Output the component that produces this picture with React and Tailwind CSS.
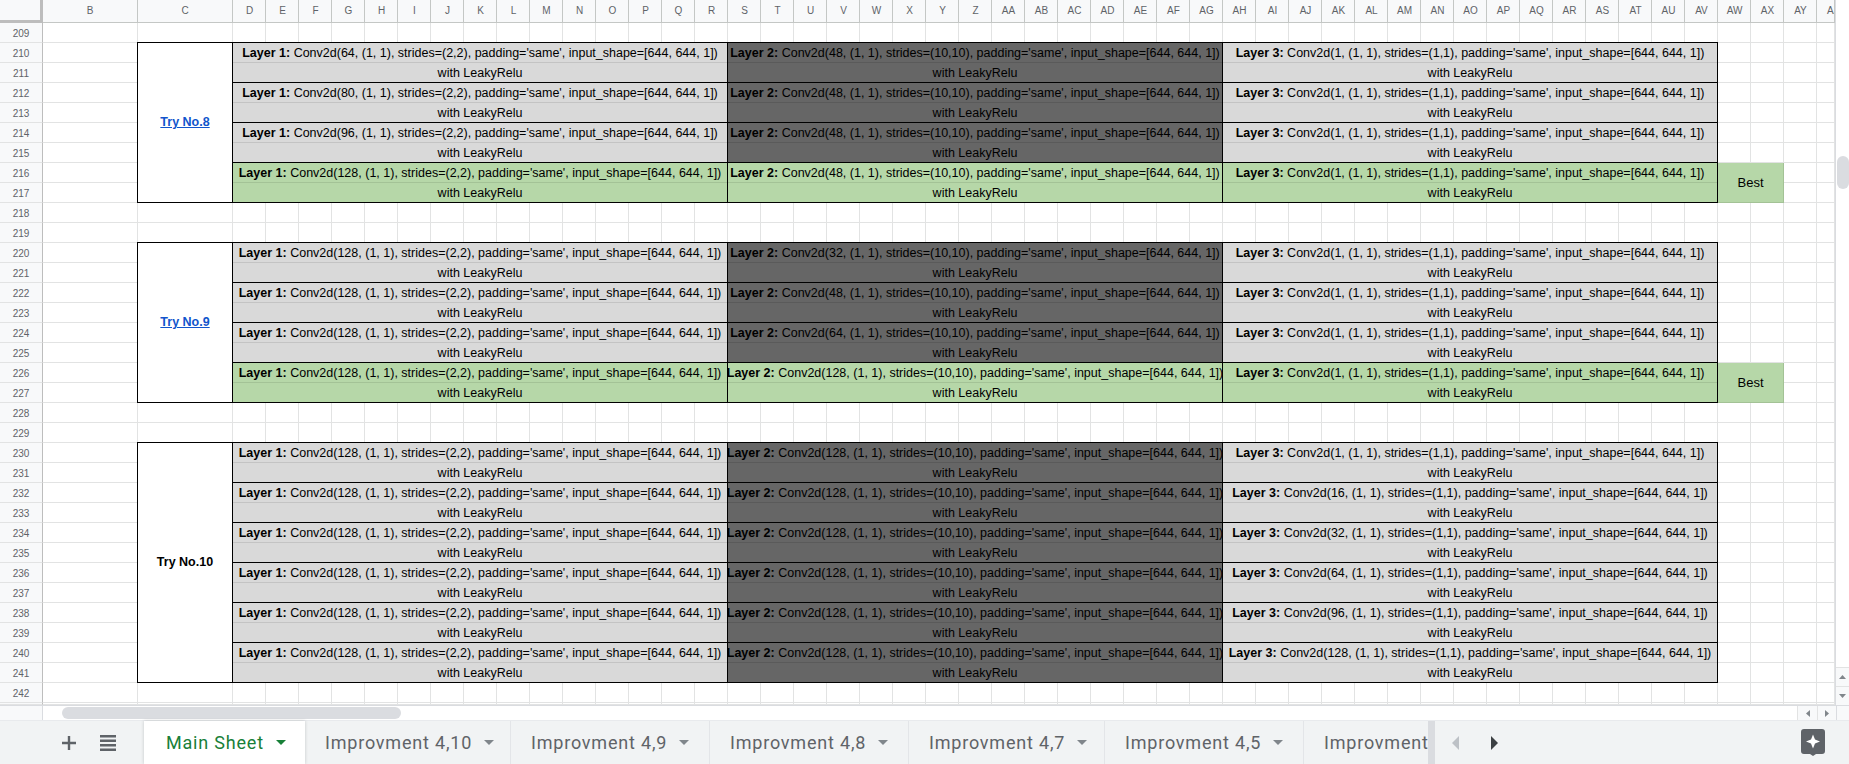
import React from "react";

const colLetters = () => {
  const out = [];
  for (let i = 1; i < 26; i++) out.push(String.fromCharCode(65 + i));
  for (let i = 0; i < 26; i++) out.push("A" + String.fromCharCode(65 + i));
  return out;
};
const COLS = colLetters();
const FIRST_ROW = 209;
const LAST_ROW = 243;

const TONES = {
  gray: { bg: "bg-[#d9d9d9]", line: "border-[#c3c3c3]" },
  dark: { bg: "bg-[#666666]", line: "border-[#5a5a5a]" },
  green: { bg: "bg-[#b6d7a8]", line: "border-[#a3c296]" },
};

const BLOCKS = [
  {
    start: 210,
    title: "Try No.8",
    link: true,
    rows: [
      [64, 48, 1],
      [80, 48, 1],
      [96, 48, 1],
      [128, 48, 1, true],
    ],
  },
  {
    start: 220,
    title: "Try No.9",
    link: true,
    rows: [
      [128, 32, 1],
      [128, 48, 1],
      [128, 64, 1],
      [128, 128, 1, true],
    ],
  },
  {
    start: 230,
    title: "Try No.10",
    link: false,
    rows: [
      [128, 128, 1],
      [128, 128, 16],
      [128, 128, 32],
      [128, 128, 64],
      [128, 128, 96],
      [128, 128, 128],
    ],
  },
];

const STRIDES = ["(2,2)", "(10,10)", "(1,1)"];
const LAYER_START_COL = [4, 19, 34];

function LayerCell({ layer, filters, row, tone }) {
  const t = TONES[tone];
  return (
    <div
      className={`z-10 -mt-px -ml-px flex min-w-0 flex-col overflow-hidden border border-black text-[12.5px] leading-[15px] text-black ${t.bg}`}
      style={{
        gridColumn: `${LAYER_START_COL[layer]} / span 15`,
        gridRow: `${row - FIRST_ROW + 2} / span 2`,
      }}
    >
      <div className={`flex h-5 shrink-0 items-center justify-center border-b pt-0.5 whitespace-nowrap ${t.line}`}>
        <span className="shrink-0">
          <b>Layer {layer + 1}:</b> Conv2d({filters}, (1, 1), strides={STRIDES[layer]}, padding='same', input_shape=[644, 644, 1])
        </span>
      </div>
      <div className="flex flex-1 items-center justify-center pt-0.5 whitespace-nowrap">with LeakyRelu</div>
    </div>
  );
}

function Block({ block }) {
  const span = block.rows.length * 2;
  return (
    <>
      <div
        className="z-10 -mt-px -ml-px flex items-center justify-center border border-black bg-white text-[12.5px] font-bold"
        style={{ gridColumn: "3 / span 1", gridRow: `${block.start - FIRST_ROW + 2} / span ${span}` }}
      >
        {block.link ? <span className="text-[#1155cc] underline">{block.title}</span> : <span className="text-black">{block.title}</span>}
      </div>
      {block.rows.map(([a, b, c, best], i) => {
        const row = block.start + i * 2;
        return (
          <React.Fragment key={row}>
            <LayerCell layer={0} filters={a} row={row} tone={best ? "green" : "gray"} />
            <LayerCell layer={1} filters={b} row={row} tone={best ? "green" : "dark"} />
            <LayerCell layer={2} filters={c} row={row} tone={best ? "green" : "gray"} />
            {best && (
              <div
                className="z-[5] flex items-center justify-center border-r border-b border-[#a3c296] bg-[#b6d7a8] text-[13px] text-black"
                style={{ gridColumn: "49 / span 2", gridRow: `${row - FIRST_ROW + 2} / span 2` }}
              >
                Best
              </div>
            )}
          </React.Fragment>
        );
      })}
    </>
  );
}

function Sheet() {
  const rows = [];
  for (let r = FIRST_ROW; r <= LAST_ROW; r++) rows.push(r);
  return (
    <div className="grid h-[705px] w-[1835px] shrink-0 grid-cols-[43px_95px_95px_repeat(48,33px)_18px] grid-rows-[23px_repeat(34,20px)_2px] overflow-hidden bg-white">
      <div
        className="border-r-[3px] border-b-[3px] border-[#bdbdbd] bg-[#f8f9fa]"
        style={{ gridColumn: 1, gridRow: 1 }}
      />
      {COLS.map((c, i) => (
        <div
          key={c}
          className="flex overflow-hidden border-r border-b border-[#c4c7c5] bg-[#f8f9fa] pt-[3px] text-[10px] leading-[16px] text-[#5f6368]"
          style={{ gridColumn: i + 2, gridRow: 1 }}
        >
          <span className={`shrink-0 text-center ${i === 0 || i === 1 ? "w-full" : "w-[33px]"}`}>{c}</span>
        </div>
      ))}
      {rows.map((r, ri) => (
        <React.Fragment key={r}>
          <div
            className="flex items-center justify-center overflow-hidden border-r border-b border-r-[#bdbdbd] border-b-[#e2e3e3] bg-[#f8f9fa] pt-px text-[10px] text-[#5f6368]"
            style={{ gridColumn: 1, gridRow: ri + 2 }}
          >
            {r < LAST_ROW ? r : ""}
          </div>
          {COLS.map((c, i) => (
            <div key={c} className="border-r border-b border-[#e2e3e3]" style={{ gridColumn: i + 2, gridRow: ri + 2 }} />
          ))}
        </React.Fragment>
      ))}
      {BLOCKS.map((b) => (
        <Block key={b.start} block={b} />
      ))}
    </div>
  );
}

function Tri({ className, dir }) {
  const pts = { up: "0,6 5,0 10,6", down: "0,0 10,0 5,6", left: "6,0 6,10 0,5", right: "0,0 6,5 0,10" }[dir];
  const vb = dir === "up" || dir === "down" ? "0 0 10 6" : "0 0 6 10";
  return (
    <svg viewBox={vb} className={className} preserveAspectRatio="none" fill="currentColor">
      <polygon points={pts} />
    </svg>
  );
}

function VScroll() {
  return (
    <div className="flex h-[705px] w-[14px] flex-col border-l border-[#dadce0] bg-white">
      <div className="mt-[156px] ml-px h-[33px] w-3 rounded-[6px] bg-[#dadce0]" />
      <div className="mt-auto flex h-[20px] items-center justify-center border-y border-[#e2e3e3] bg-[#f8f9fa] text-[#80868b]">
        <Tri dir="up" className="h-[4px] w-[7px]" />
      </div>
      <div className="flex h-[18px] items-center justify-center bg-[#f8f9fa] text-[#80868b]">
        <Tri dir="down" className="h-[4px] w-[7px]" />
      </div>
    </div>
  );
}

function HScroll() {
  return (
    <div className="flex h-[15px] w-full items-stretch border-t border-[#dadce0] bg-white">
      <div className="w-[43px] shrink-0 border-r border-[#dadce0] bg-[#f8f9fa]" />
      <div className="mt-px ml-[19px] h-[12px] w-[339px] rounded-[6px] bg-[#dadce0]" />
      <div className="ml-auto flex w-[52px] items-stretch">
        <div className="flex w-[20px] items-center justify-center border-l border-[#e2e3e3] bg-[#f8f9fa] text-[#80868b]">
          <Tri dir="left" className="h-[7px] w-[4px]" />
        </div>
        <div className="flex w-[19px] items-center justify-center border-l border-[#e2e3e3] bg-[#f8f9fa] text-[#80868b]">
          <Tri dir="right" className="h-[7px] w-[4px]" />
        </div>
        <div className="w-[13px] border-l border-[#dadce0] bg-[#f8f9fa]" />
      </div>
    </div>
  );
}

const TABS = [
  { name: "Improvment 4,10", w: "w-[206px]" },
  { name: "Improvment 4,9", w: "w-[199px]" },
  { name: "Improvment 4,8", w: "w-[199px]" },
  { name: "Improvment 4,7", w: "w-[196px]" },
  { name: "Improvment 4,5", w: "w-[199px]" },
];

function TabBar() {
  return (
    <div className="flex h-[44px] w-full items-stretch border-t border-[#e8eaed] bg-[#f1f3f4] font-['Roboto',sans-serif] text-[18px] tracking-[0.8px] text-[#5f6368]">
      <div className="flex w-[144px] shrink-0 items-center">
        <svg viewBox="0 0 14 14" className="ml-[62px] h-[14px] w-[14px] text-[#5f6368]" fill="currentColor">
          <path d="M5.8 0h2.4v5.8H14v2.4H8.2V14H5.8V8.2H0V5.8h5.8z" />
        </svg>
        <svg viewBox="0 0 16 16" className="ml-[24px] h-[16px] w-[16px] text-[#5f6368]" fill="currentColor">
          <path d="M0 0h16v2.4H0zM0 4.5h16v2.4H0zM0 9h16v2.4H0zM0 13.6h16V16H0z" />
        </svg>
      </div>
      <div className="flex w-[161px] shrink-0 items-center bg-white pl-[22px] text-[#188038] shadow-[0_0_3px_rgba(60,64,67,0.25)]">
        Main Sheet
        <Tri dir="down" className="ml-[12px] h-[5px] w-[10px] text-[#188038]" />
      </div>
      {TABS.map((t) => (
        <div key={t.name} className={`flex shrink-0 items-center border-r border-[#e3e5e8] pl-5 whitespace-nowrap ${t.w}`}>
          {t.name}
          <Tri dir="down" className="ml-[12px] h-[5px] w-[10px] text-[#80868b]" />
        </div>
      ))}
      <div className="flex w-[124px] shrink-0 items-center overflow-hidden pl-5 whitespace-nowrap">Improvment 4,4</div>
      <div className="w-[7px] shrink-0 bg-[#dadce0]" />
      <div className="flex flex-1 items-center">
        <Tri dir="left" className="ml-[17px] h-[14px] w-[7px] text-[#bdc1c6]" />
        <Tri dir="right" className="ml-[32px] h-[14px] w-[7px] text-[#3c4043]" />
        <svg viewBox="0 0 24 27" className="mr-[24px] ml-auto h-[27px] w-[24px]">
          <path d="M3 0h18a3 3 0 0 1 3 3v19a3 3 0 0 1-3 3h-6l-3 2-3-2H3a3 3 0 0 1-3-3V3a3 3 0 0 1 3-3z" fill="#5f6368" />
          <path d="M12 5.5l2 5 5 2-5 2-2 5-2-5-5-2 5-2z" fill="#ffffff" />
        </svg>
      </div>
    </div>
  );
}

export default function App() {
  return (
    <div className="flex h-[764px] w-[1849px] flex-col overflow-hidden bg-white font-['Liberation_Sans',Arial,sans-serif]">
      <div className="flex">
        <Sheet />
        <VScroll />
      </div>
      <HScroll />
      <TabBar />
    </div>
  );
}
